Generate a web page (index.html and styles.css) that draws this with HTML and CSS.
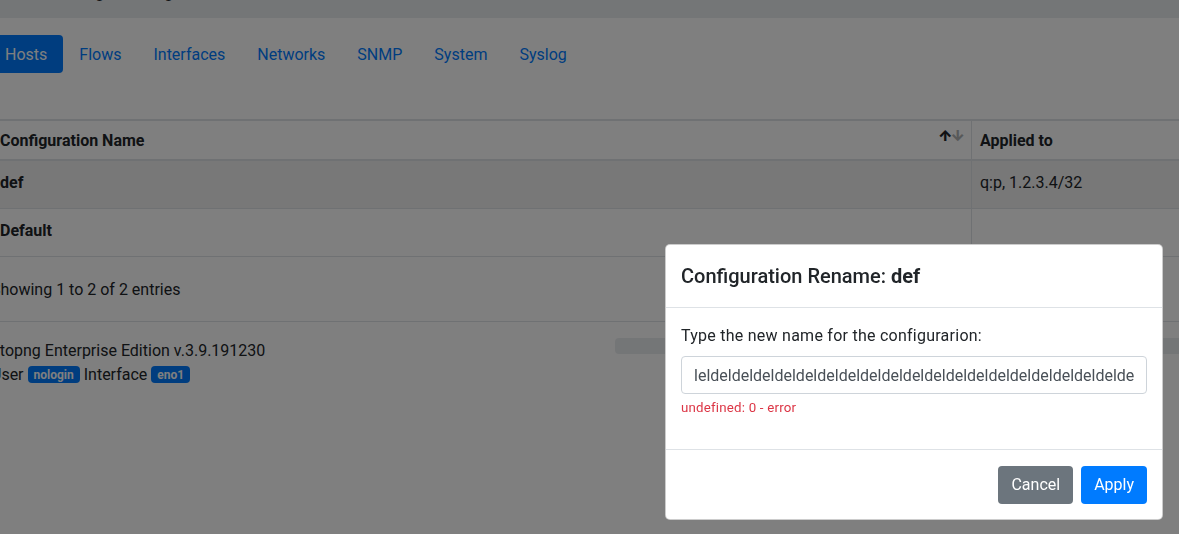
FILE: index.html
```html
<!DOCTYPE html>
<html lang="en">
<head>
<meta charset="utf-8">
<title>Configuration Rename</title>
<link rel="stylesheet" href="styles.css">
</head>
<body>
<div class="topbar"><span class="topbar-text">Pool Settings / Config</span></div>
<div class="page">
  <ul class="nav-pills">
    <li><a class="pill active" href="#">Hosts</a></li>
    <li><a class="pill" href="#">Flows</a></li>
    <li><a class="pill" href="#">Interfaces</a></li>
    <li><a class="pill" href="#">Networks</a></li>
    <li><a class="pill" href="#">SNMP</a></li>
    <li><a class="pill" href="#">System</a></li>
    <li><a class="pill" href="#">Syslog</a></li>
  </ul>
  <table class="cfg-table">
    <thead>
      <tr>
        <th class="col-name"><div class="th-inner"><span>Configuration Name</span><span class="sort"><span class="sort-up">↑</span><span class="sort-down">↓</span></span></div></th>
        <th class="col-applied">Applied to</th>
      </tr>
    </thead>
    <tbody>
      <tr class="row-selected">
        <td class="name">def</td>
        <td>q:p, 1.2.3.4/32</td>
      </tr>
      <tr>
        <td class="name">Default</td>
        <td></td>
      </tr>
    </tbody>
  </table>
  <div class="info">Showing 1 to 2 of 2 entries</div>
  <footer class="footer">
    <div class="footer-left">
      <div>ntopng Enterprise Edition v.3.9.191230</div>
      <div>User <span class="badge">nologin</span> Interface <span class="badge">eno1</span></div>
    </div>
    <div class="progress"></div>
  </footer>
</div>
<div class="backdrop"></div>
<div class="modal">
  <div class="modal-header">
    <h5 class="modal-title">Configuration Rename: <b>def</b></h5>
  </div>
  <div class="modal-body">
    <div class="form-group">
      <label class="label" for="cfgname">Type the new name for the configurarion:</label>
      <input id="cfgname" class="form-control" type="text" value="leldeldeldeldeldeldeldeldeldeldeldeldeldeldeldeldeldeldeldeldeldeldeldel">
      <small class="error">undefined: 0 - error</small>
    </div>
  </div>
  <div class="modal-footer">
    <button class="btn btn-secondary">Cancel</button>
    <button class="btn btn-primary">Apply</button>
  </div>
</div>
</body>
</html>
```
FILE: styles.css
```css
html, body {
  margin: 0;
  padding: 0;
  overflow: hidden;
  height: 100%;
}
body {
  font-family: Roboto, Inter, "Liberation Sans", sans-serif;
  font-size: 16px;
  line-height: 24px;
  color: #212529;
  background: #fff;
}
.topbar {
  height: 18px;
  background: #e9ecef;
  overflow: hidden;
}
.topbar-text {
  display: block;
  margin-top: -17px;
  margin-left: 18px;
  line-height: 20px;
  font-size: 16px;
  color: #212529;
}
.page {
  margin-left: -8px;
  width: 1400px;
}
.nav-pills {
  list-style: none;
  margin: 17px 0 0 -3px;
  padding: 0;
  display: flex;
}
.pill {
  display: block;
  padding: 8px 16px 6px;
  color: #007bff;
  text-decoration: none;
  border-radius: 4px;
}
.pill.active {
  background: #007bff;
  color: #fff;
}
.cfg-table {
  margin-top: 46px;
  border-collapse: collapse;
  width: 1400px;
}
.cfg-table th {
  text-align: left;
  font-weight: 700;
  padding: 8px 8px 6px;
  border-top: 2px solid #dee2e6;
  border-bottom: 2px solid #dee2e6;
}
.col-name {
  width: 963px;
  border-right: 1px solid #dee2e6;
}
.th-inner {
  display: flex;
  justify-content: space-between;
  align-items: center;
}
.sort {
  display: flex;
  font-weight: 900;
  font-size: 15px;
  line-height: 16px;
  margin-top: -10px;
  margin-right: -2px;
}
.sort-down {
  opacity: 0.35;
  margin-left: -2px;
}
.cfg-table td {
  padding: 10px 8px 13px;
  border-bottom: 1px solid #dee2e6;
}
.cfg-table td:first-child {
  border-right: 1px solid #dee2e6;
}
.cfg-table td.name {
  font-weight: 700;
}
.row-selected td {
  background: rgba(0, 0, 0, 0.06);
}
.info {
  padding: 21px 0 19px 0;
  margin-left: -1px;
  border-bottom: 1px solid #dee2e6;
}
.footer {
  display: grid;
  grid-template-columns: 624px 600px;
  align-items: start;
  padding-top: 17px;
  margin-left: -1px;
}
.progress {
  height: 16px;
  margin-top: -1px;
  background: #e9ecef;
  border-radius: 4px;
}
.badge {
  display: inline-block;
  background: #007bff;
  color: #fff;
  font-size: 12px;
  font-weight: 700;
  line-height: 12px;
  padding: 3px 6px 2px;
  border-radius: 4px;
  vertical-align: 1px;
}
.backdrop {
  position: fixed;
  inset: 0;
  background: rgba(0, 0, 0, 0.5);
}
.modal {
  position: absolute;
  left: 665px;
  top: 244px;
  width: 496px;
  background: #fff;
  border: 1px solid rgba(0, 0, 0, 0.2);
  border-radius: 5px;
}
.modal-header {
  padding: 16px 15px;
  border-bottom: 1px solid #dee2e6;
}
.modal-title {
  margin: 0;
  font-size: 20px;
  line-height: 30px;
  font-weight: 500;
}
.modal-title b {
  font-weight: 700;
}
.modal-body {
  padding: 16px 15px;
}
.form-group {
  margin-bottom: 16px;
}
.label {
  display: block;
  margin-bottom: 8px;
  letter-spacing: 0.25px;
}
.form-control {
  display: block;
  box-sizing: border-box;
  width: 100%;
  height: 38px;
  padding: 6px 12px;
  font-family: inherit;
  font-size: 16px;
  line-height: 24px;
  color: #495057;
  border: 1px solid #ced4da;
  border-radius: 4px;
  background: #fff;
}
.error {
  display: block;
  margin-top: 4px;
  font-size: 13.3px;
  line-height: 19px;
  color: #dc3545;
  letter-spacing: 0.2px;
}
.modal-footer {
  display: flex;
  justify-content: flex-end;
  gap: 8px;
  padding: 16px 15px 15px;
  border-top: 1px solid #dee2e6;
}
.btn {
  font-family: inherit;
  font-size: 16px;
  line-height: 24px;
  padding: 6px 12px;
  border: 1px solid transparent;
  border-radius: 4px;
  color: #fff;
}
.btn-secondary {
  background: #6c757d;
}
.btn-primary {
  background: #007bff;
}
```
